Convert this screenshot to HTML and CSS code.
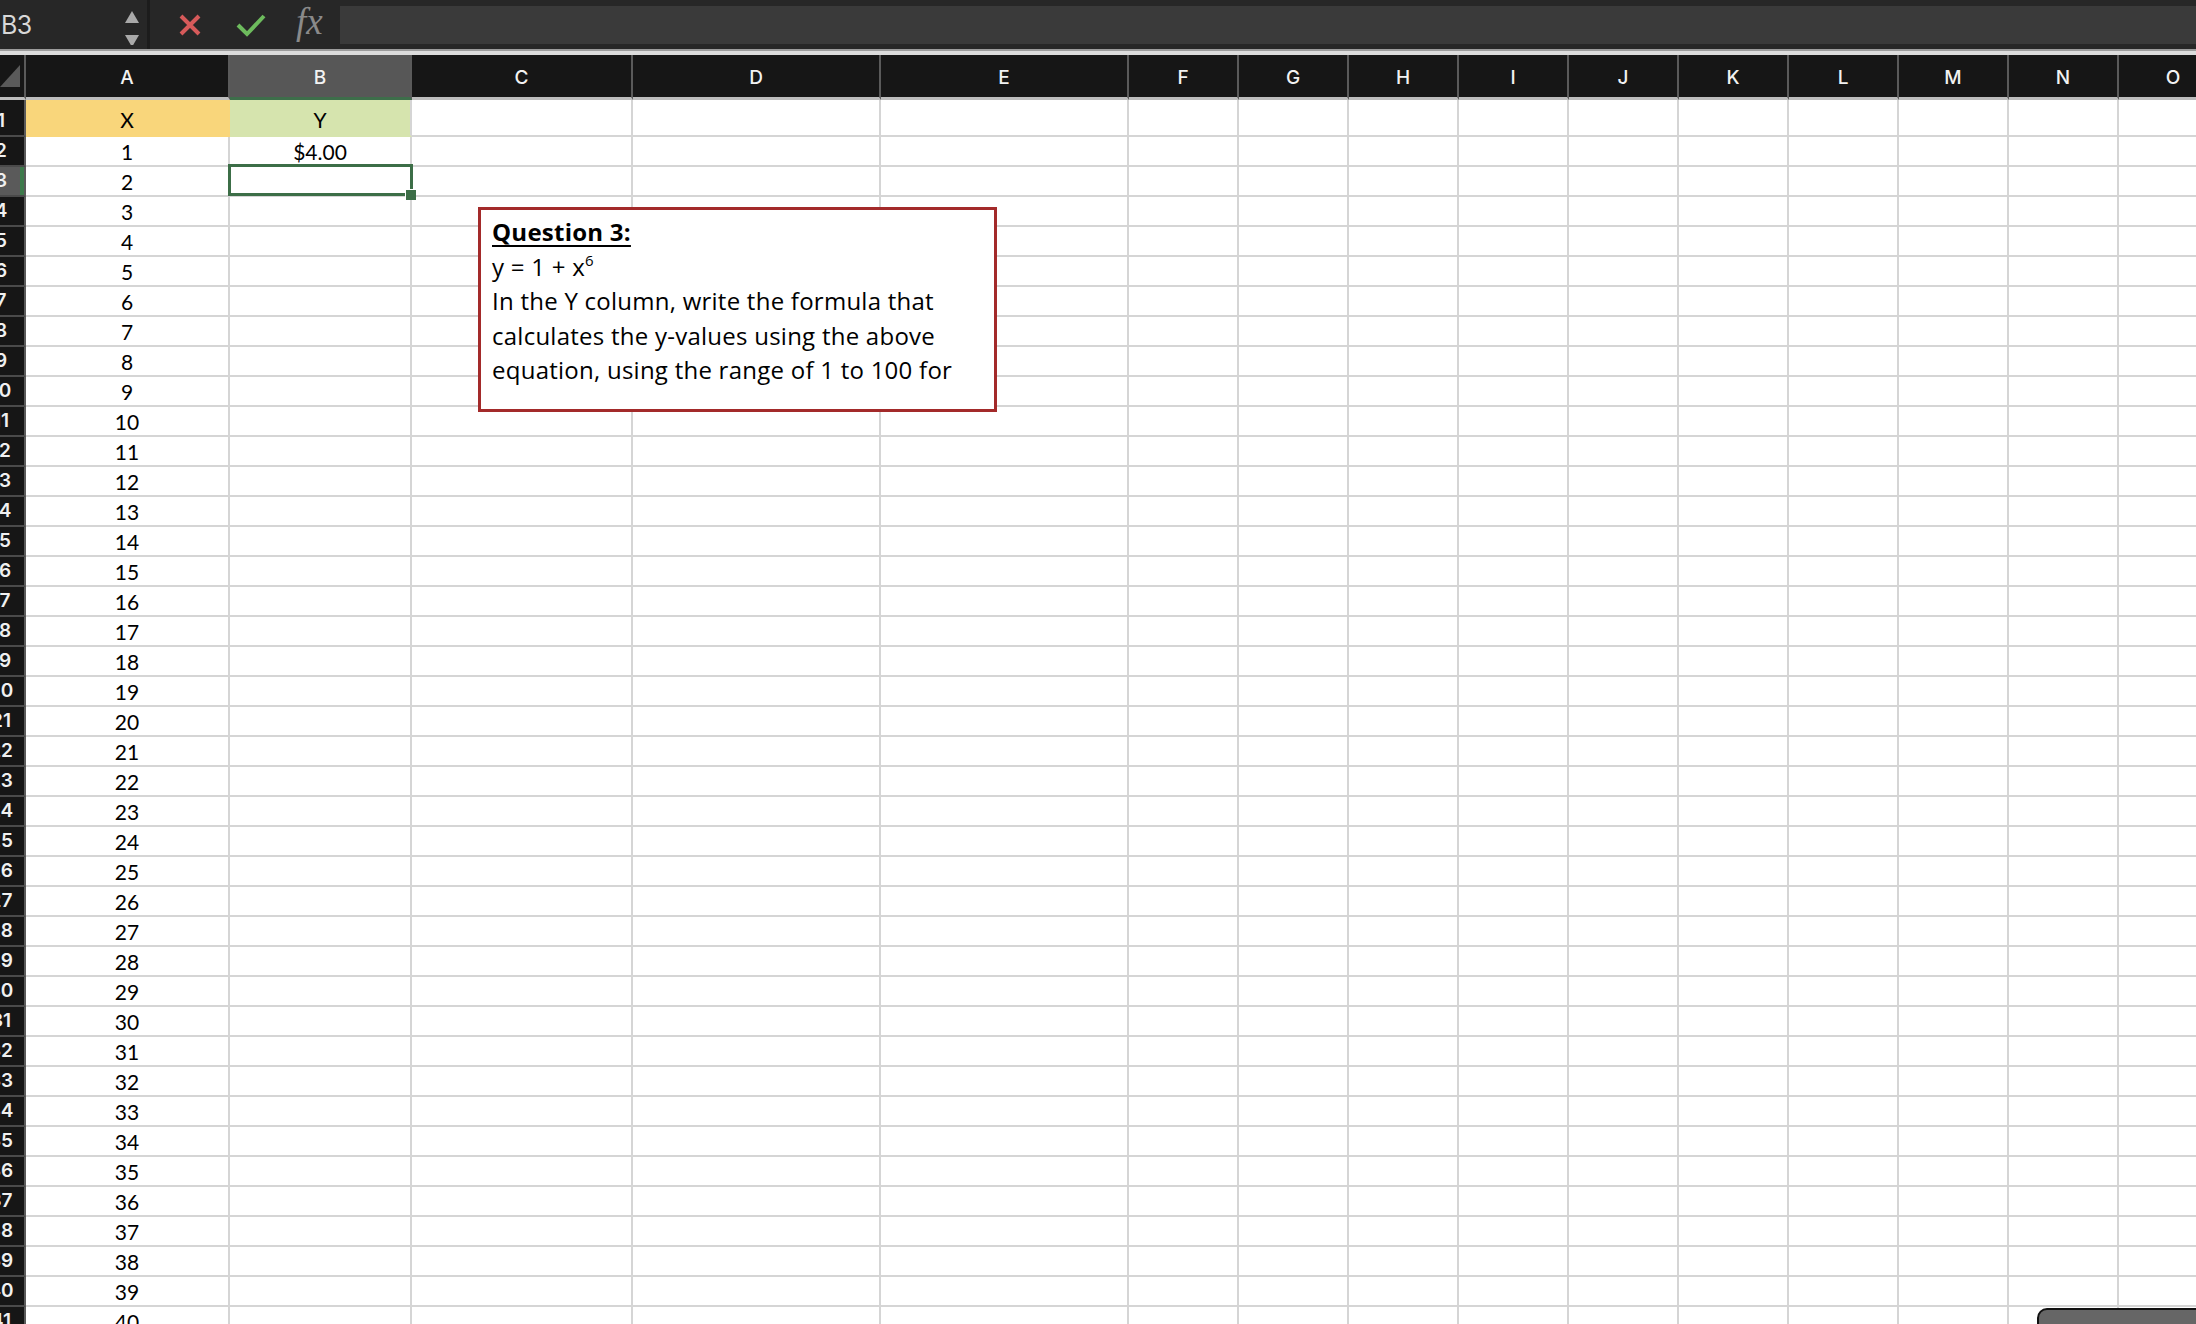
FILE: index.html
```html
<!DOCTYPE html>
<html lang="en">

<head>
  <meta charset="UTF-8" />
  <meta name="viewport" content="width=device-width, initial-scale=1.0" />
  <title>Question 3 - Sheet1</title>
  <link rel="stylesheet" href="styles.css">
</head>

<body>
  <div class="toolbar">
    <div class="name-box">
      <span class="cell-ref">B3</span>
      <svg class="spinner" width="16" height="40" viewBox="0 0 16 40">
        <path d="M8 6 L15 18 L1 18 Z" fill="#a9a9a9" />
        <path d="M1 30 L15 30 L8 42 Z" fill="#a9a9a9" />
      </svg>
    </div>
    <div class="formula-icons">
      <svg class="icon-cancel" width="24" height="22" viewBox="0 0 24 22">
        <path d="M3 2 L21 20 M21 2 L3 20" stroke="#d65a5a" stroke-width="4" fill="none" />
      </svg>
      <svg class="icon-enter" width="30" height="24" viewBox="0 0 30 24">
        <path d="M2 12 L11 21 L28 3" stroke="#6dbb5d" stroke-width="4" fill="none" />
      </svg>
      <span class="fx">fx</span>
    </div>
    <div class="formula-input"></div>
  </div>

  <div class="sheet">
    <table class="grid">
      <colgroup>
        <col class="col-rowhead">
        <col style="width: 204px">
        <col style="width: 182px">
        <col style="width: 221px">
        <col style="width: 248px">
        <col style="width: 248px">
        <col class="col-std"><col class="col-std"><col class="col-std"><col class="col-std"><col class="col-std">
        <col class="col-std"><col class="col-std"><col class="col-std"><col class="col-std"><col class="col-std">
      </colgroup>
      <thead>
        <tr>
          <th class="corner">
            <svg width="24" height="42" viewBox="0 0 24 42"><path d="M0 32 L20 10 L20 32 Z" fill="#5a5a5a" /></svg>
          </th>
          <th>A</th><th class="active">B</th><th>C</th><th>D</th><th>E</th><th>F</th><th>G</th><th>H</th>
          <th>I</th><th>J</th><th>K</th><th>L</th><th>M</th><th>N</th><th>O</th>
        </tr>
      </thead>
      <tbody>
        <tr class="row-title"><th><span>1</span></th><td class="fill-x">X</td><td class="fill-y">Y</td><td></td><td></td><td></td><td></td><td></td><td></td><td></td><td></td><td></td><td></td><td></td><td></td><td></td></tr>
        <tr><th><span>2</span></th><td>1</td><td>$4.00</td><td></td><td></td><td></td><td></td><td></td><td></td><td></td><td></td><td></td><td></td><td></td><td></td><td></td></tr>
        <tr><th class="active"><span>3</span></th><td>2</td><td class="selected"></td><td></td><td></td><td></td><td></td><td></td><td></td><td></td><td></td><td></td><td></td><td></td><td></td><td></td></tr>
        <tr><th><span>4</span></th><td>3</td><td></td><td></td><td></td><td></td><td></td><td></td><td></td><td></td><td></td><td></td><td></td><td></td><td></td><td></td></tr>
        <tr><th><span>5</span></th><td>4</td><td></td><td></td><td></td><td></td><td></td><td></td><td></td><td></td><td></td><td></td><td></td><td></td><td></td><td></td></tr>
        <tr><th><span>6</span></th><td>5</td><td></td><td></td><td></td><td></td><td></td><td></td><td></td><td></td><td></td><td></td><td></td><td></td><td></td><td></td></tr>
        <tr><th><span>7</span></th><td>6</td><td></td><td></td><td></td><td></td><td></td><td></td><td></td><td></td><td></td><td></td><td></td><td></td><td></td><td></td></tr>
        <tr><th><span>8</span></th><td>7</td><td></td><td></td><td></td><td></td><td></td><td></td><td></td><td></td><td></td><td></td><td></td><td></td><td></td><td></td></tr>
        <tr><th><span>9</span></th><td>8</td><td></td><td></td><td></td><td></td><td></td><td></td><td></td><td></td><td></td><td></td><td></td><td></td><td></td><td></td></tr>
        <tr><th><span>10</span></th><td>9</td><td></td><td></td><td></td><td></td><td></td><td></td><td></td><td></td><td></td><td></td><td></td><td></td><td></td><td></td></tr>
        <tr><th><span>11</span></th><td>10</td><td></td><td></td><td></td><td></td><td></td><td></td><td></td><td></td><td></td><td></td><td></td><td></td><td></td><td></td></tr>
        <tr><th><span>12</span></th><td>11</td><td></td><td></td><td></td><td></td><td></td><td></td><td></td><td></td><td></td><td></td><td></td><td></td><td></td><td></td></tr>
        <tr><th><span>13</span></th><td>12</td><td></td><td></td><td></td><td></td><td></td><td></td><td></td><td></td><td></td><td></td><td></td><td></td><td></td><td></td></tr>
        <tr><th><span>14</span></th><td>13</td><td></td><td></td><td></td><td></td><td></td><td></td><td></td><td></td><td></td><td></td><td></td><td></td><td></td><td></td></tr>
        <tr><th><span>15</span></th><td>14</td><td></td><td></td><td></td><td></td><td></td><td></td><td></td><td></td><td></td><td></td><td></td><td></td><td></td><td></td></tr>
        <tr><th><span>16</span></th><td>15</td><td></td><td></td><td></td><td></td><td></td><td></td><td></td><td></td><td></td><td></td><td></td><td></td><td></td><td></td></tr>
        <tr><th><span>17</span></th><td>16</td><td></td><td></td><td></td><td></td><td></td><td></td><td></td><td></td><td></td><td></td><td></td><td></td><td></td><td></td></tr>
        <tr><th><span>18</span></th><td>17</td><td></td><td></td><td></td><td></td><td></td><td></td><td></td><td></td><td></td><td></td><td></td><td></td><td></td><td></td></tr>
        <tr><th><span>19</span></th><td>18</td><td></td><td></td><td></td><td></td><td></td><td></td><td></td><td></td><td></td><td></td><td></td><td></td><td></td><td></td></tr>
        <tr><th><span>20</span></th><td>19</td><td></td><td></td><td></td><td></td><td></td><td></td><td></td><td></td><td></td><td></td><td></td><td></td><td></td><td></td></tr>
        <tr><th><span>21</span></th><td>20</td><td></td><td></td><td></td><td></td><td></td><td></td><td></td><td></td><td></td><td></td><td></td><td></td><td></td><td></td></tr>
        <tr><th><span>22</span></th><td>21</td><td></td><td></td><td></td><td></td><td></td><td></td><td></td><td></td><td></td><td></td><td></td><td></td><td></td><td></td></tr>
        <tr><th><span>23</span></th><td>22</td><td></td><td></td><td></td><td></td><td></td><td></td><td></td><td></td><td></td><td></td><td></td><td></td><td></td><td></td></tr>
        <tr><th><span>24</span></th><td>23</td><td></td><td></td><td></td><td></td><td></td><td></td><td></td><td></td><td></td><td></td><td></td><td></td><td></td><td></td></tr>
        <tr><th><span>25</span></th><td>24</td><td></td><td></td><td></td><td></td><td></td><td></td><td></td><td></td><td></td><td></td><td></td><td></td><td></td><td></td></tr>
        <tr><th><span>26</span></th><td>25</td><td></td><td></td><td></td><td></td><td></td><td></td><td></td><td></td><td></td><td></td><td></td><td></td><td></td><td></td></tr>
        <tr><th><span>27</span></th><td>26</td><td></td><td></td><td></td><td></td><td></td><td></td><td></td><td></td><td></td><td></td><td></td><td></td><td></td><td></td></tr>
        <tr><th><span>28</span></th><td>27</td><td></td><td></td><td></td><td></td><td></td><td></td><td></td><td></td><td></td><td></td><td></td><td></td><td></td><td></td></tr>
        <tr><th><span>29</span></th><td>28</td><td></td><td></td><td></td><td></td><td></td><td></td><td></td><td></td><td></td><td></td><td></td><td></td><td></td><td></td></tr>
        <tr><th><span>30</span></th><td>29</td><td></td><td></td><td></td><td></td><td></td><td></td><td></td><td></td><td></td><td></td><td></td><td></td><td></td><td></td></tr>
        <tr><th><span>31</span></th><td>30</td><td></td><td></td><td></td><td></td><td></td><td></td><td></td><td></td><td></td><td></td><td></td><td></td><td></td><td></td></tr>
        <tr><th><span>32</span></th><td>31</td><td></td><td></td><td></td><td></td><td></td><td></td><td></td><td></td><td></td><td></td><td></td><td></td><td></td><td></td></tr>
        <tr><th><span>33</span></th><td>32</td><td></td><td></td><td></td><td></td><td></td><td></td><td></td><td></td><td></td><td></td><td></td><td></td><td></td><td></td></tr>
        <tr><th><span>34</span></th><td>33</td><td></td><td></td><td></td><td></td><td></td><td></td><td></td><td></td><td></td><td></td><td></td><td></td><td></td><td></td></tr>
        <tr><th><span>35</span></th><td>34</td><td></td><td></td><td></td><td></td><td></td><td></td><td></td><td></td><td></td><td></td><td></td><td></td><td></td><td></td></tr>
        <tr><th><span>36</span></th><td>35</td><td></td><td></td><td></td><td></td><td></td><td></td><td></td><td></td><td></td><td></td><td></td><td></td><td></td><td></td></tr>
        <tr><th><span>37</span></th><td>36</td><td></td><td></td><td></td><td></td><td></td><td></td><td></td><td></td><td></td><td></td><td></td><td></td><td></td><td></td></tr>
        <tr><th><span>38</span></th><td>37</td><td></td><td></td><td></td><td></td><td></td><td></td><td></td><td></td><td></td><td></td><td></td><td></td><td></td><td></td></tr>
        <tr><th><span>39</span></th><td>38</td><td></td><td></td><td></td><td></td><td></td><td></td><td></td><td></td><td></td><td></td><td></td><td></td><td></td><td></td></tr>
        <tr><th><span>40</span></th><td>39</td><td></td><td></td><td></td><td></td><td></td><td></td><td></td><td></td><td></td><td></td><td></td><td></td><td></td><td></td></tr>
        <tr><th><span>41</span></th><td>40</td><td></td><td></td><td></td><td></td><td></td><td></td><td></td><td></td><td></td><td></td><td></td><td></td><td></td><td></td></tr>
      </tbody>
    </table>

    <div class="text-box">
      <p class="q-title">Question 3:</p>
      <p>y = 1 + x<sup>6</sup></p>
      <p>In the Y column, write the formula that calculates the y-values using the above equation, using the range of 1 to 100 for</p>
    </div>

    <div class="scroll-thumb"></div>
  </div>
</body>

</html>
```

FILE: styles.css
```css
* {
  box-sizing: border-box;
}

html,
body {
  margin: 0;
  padding: 0;
}

body {
  width: 2196px;
  height: 1324px;
  overflow: hidden;
  background-color: #fff;
  font-family: Lato, "Open Sans", sans-serif;
}

/* formula bar */
.toolbar {
  display: flex;
  height: 51px;
  background-color: #272727;
  border-bottom: 2px solid #9c9c9c;
}

.name-box {
  display: flex;
  align-items: center;
  justify-content: space-between;
  width: 150px;
  height: 49px;
  padding: 0 7px 0 1px;
  border-right: 3px solid #1c1c1c;
}

.cell-ref {
  font-family: Inter, "Open Sans", sans-serif;
  font-size: 25px;
  color: #d8d8d8;
  letter-spacing: -0.5px;
}

.formula-icons {
  display: flex;
  align-items: center;
  width: 190px;
  height: 49px;
  padding-left: 28px;
}

.icon-cancel {
  margin-right: 34px;
}

.icon-enter {
  margin-right: 30px;
}

.fx {
  font-family: "Liberation Serif", serif;
  font-style: italic;
  font-size: 37px;
  color: #8a8a8a;
  margin-top: -6px;
}

.formula-input {
  flex: 1;
  height: 38px;
  margin-top: 6px;
  background-color: #3a3a3a;
}

/* sheet */
.sheet {
  position: relative;
  border-top: 4px solid #dcdcdc;
}

.grid {
  border-collapse: separate;
  border-spacing: 0;
  table-layout: fixed;
  width: 2229px;
}

.col-rowhead {
  width: 26px;
}

.col-std {
  width: 110px;
}

.grid th,
.grid td {
  padding: 0;
  overflow: hidden;
  white-space: nowrap;
}

.grid thead tr {
  height: 44px;
}

.grid thead th {
  background-color: #161616;
  color: #f2f2f2;
  font-family: Inter, "Open Sans", sans-serif;
  font-weight: 500;
  font-size: 19px;
  text-align: center;
  padding-top: 3px;
  border-right: 2px solid #5a5a5a;
  border-bottom: 3px solid #bdbdbd;
}

.grid thead th.active {
  background-color: #575757;
  border-bottom-color: #3d6e4a;
}

.grid thead th.corner {
  padding: 0;
  text-align: left;
  vertical-align: top;
}

.grid thead th.corner svg {
  display: block;
}

.grid tbody tr {
  height: 30px;
}

.grid tbody tr.row-title {
  height: 37px;
}

.grid tbody th {
  background-color: #161616;
  color: #f0f0f0;
  font-family: Inter, "Open Sans", sans-serif;
  font-weight: 600;
  font-size: 19px;
  vertical-align: bottom;
  padding-bottom: 5px;
  border-right: 2px solid #5a5a5a;
  border-bottom: 2px solid #4a4a4a;
}

.grid tbody th span {
  display: block;
  width: 46px;
  margin-left: -22px;
  text-align: center;
  line-height: 1;
}

.grid tbody th.active {
  background-color: #5a5a5a;
  box-shadow: inset -4px 0 0 #3d7a4b;
}

.grid td {
  font-size: 21px;
  line-height: 1;
  color: #000;
  text-align: center;
  border-right: 2px solid #d5d5d5;
  border-bottom: 2px solid #d5d5d5;
}

.row-title td {
  padding-top: 3px;
}

.grid td.fill-x {
  background-color: #f9d67b;
  border-color: #f9d67b;
}

.grid td.fill-y {
  background-color: #d6e4ae;
  border-bottom-color: #d6e4ae;
}

.grid td.selected {
  position: relative;
  overflow: visible;
}

.grid td.selected::before {
  content: "";
  position: absolute;
  top: -3px;
  left: -2px;
  right: -3px;
  bottom: -1px;
  border: 3px solid #3c6e47;
}

.grid td.selected::after {
  content: "";
  position: absolute;
  right: -6px;
  bottom: -5px;
  width: 10px;
  height: 10px;
  background-color: #3c6e47;
  border-left: 1px solid #fff;
  border-top: 1px solid #fff;
}

/* floating question box */
.text-box {
  position: absolute;
  left: 478px;
  top: 152px;
  width: 519px;
  height: 205px;
  padding: 5px 11px;
  background-color: #fff;
  border: 3px solid #a32a2a;
  font-family: "Open Sans", Lato, sans-serif;
  font-size: 24px;
  letter-spacing: 0.25px;
  line-height: 34.5px;
  color: #000;
}

.text-box p {
  margin: 0;
}

.q-title {
  font-weight: bold;
  text-decoration: underline;
  text-decoration-thickness: 2px;
  text-underline-offset: 4px;
}

.text-box sup {
  font-size: 15px;
  line-height: 0;
  vertical-align: 10px;
}

.scroll-thumb {
  position: absolute;
  left: 2037px;
  top: 1253px;
  width: 200px;
  height: 40px;
  background-color: #666;
  border: 2px solid #111;
  border-radius: 10px;
}
```
